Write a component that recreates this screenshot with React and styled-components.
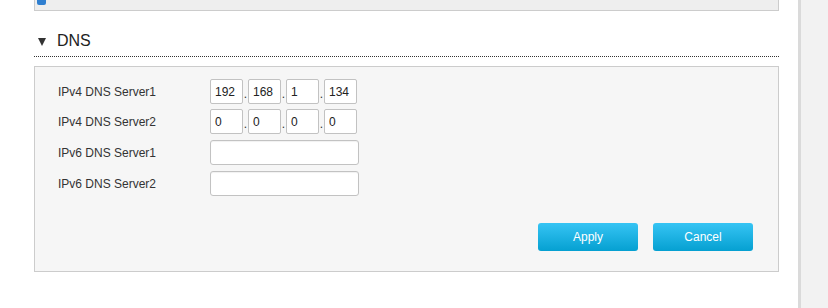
import React from "react";
import styled, { createGlobalStyle } from "styled-components";

const Global = createGlobalStyle`
  html, body {
    margin: 0;
    padding: 0;
    background: #f2f2f2;
    font-family: "Liberation Sans", Arial, sans-serif;
  }
`;

const Page = styled.div`
  display: flex;
  height: 308px;
  overflow: hidden;
`;

const Main = styled.main`
  width: 798px;
  background: #ffffff;
  padding-left: 34px;
  box-sizing: border-box;
`;

const Rail = styled.div`
  flex: 1;
  border-left: 3px solid #dadada;
  background: #f2f2f2;
`;

const Column = styled.div`
  width: 745px;
  display: flex;
  flex-direction: column;
`;

const PrevPanel = styled.div`
  height: 10px;
  background: #eeeeee;
  border: 1px solid #cccccc;
  border-top: none;
  padding-left: 2px;
`;

const CheckTail = styled.div`
  width: 9px;
  height: 5px;
  background: #2f7fd0;
  border-radius: 0 0 2px 2px;
`;

const Heading = styled.div`
  display: flex;
  align-items: center;
  height: 46px;
  padding-left: 4px;
  padding-top: 14px;
  box-sizing: border-box;
  border-bottom: 1px dotted #333333;
  font-size: 16px;
  color: #222222;
`;

const Arrow = styled.span`
  width: 0;
  height: 0;
  border-left: 4.5px solid transparent;
  border-right: 4.5px solid transparent;
  border-top: 8px solid #333333;
  margin: 2px 11px 0 0;
`;

const Box = styled.section`
  margin-top: 9px;
  height: 206px;
  box-sizing: border-box;
  background: #f6f6f6;
  border: 1px solid #cccccc;
  padding: 12px 25px 0 23px;
  display: flex;
  flex-direction: column;
`;

const Form = styled.div`
  display: grid;
  grid-template-columns: 152px auto;
  row-gap: 5px;
  align-items: center;
  justify-content: start;
`;

const Label = styled.div`
  font-size: 12px;
  color: #333333;
  margin-top: ${(p) => (p.$shift ? "1px" : "0")};
`;

const Octets = styled.div`
  display: flex;
  align-items: flex-end;
  height: 25px;
`;

const Octet = styled.div`
  width: 33px;
  height: 25px;
  box-sizing: border-box;
  border: 1px solid #c2c2c2;
  border-radius: 2px;
  background: #ffffff;
  font-size: 12px;
  color: #222222;
  padding-left: 4px;
  display: flex;
  align-items: center;
`;

const Dot = styled.span`
  width: 5px;
  text-align: center;
  font-size: 12px;
  line-height: 12px;
  color: #333333;
  padding-bottom: 4px;
`;

const Field = styled.div`
  width: 149px;
  height: 25px;
  box-sizing: border-box;
  border: 1px solid #c2c2c2;
  border-radius: 3px;
  background: #ffffff;
  box-shadow: inset 0 1px 1px rgba(0, 0, 0, 0.06);
  margin-top: ${(p) => (p.$shift ? "1px" : "0")};
`;

const Actions = styled.div`
  display: flex;
  justify-content: flex-end;
  gap: 15px;
  margin-top: 27px;
`;

const Button = styled.button`
  width: 100px;
  height: 28px;
  border: none;
  border-radius: 3px;
  background: linear-gradient(#36c4f4, #05a0d1);
  color: #ffffff;
  font-family: "Liberation Sans", Arial, sans-serif;
  font-size: 12px;
  cursor: pointer;
`;

const rows = [
  { label: "IPv4 DNS Server1", ip: ["192", "168", "1", "134"] },
  { label: "IPv4 DNS Server2", ip: ["0", "0", "0", "0"] },
  { label: "IPv6 DNS Server1" },
  { label: "IPv6 DNS Server2" },
];

const IpInput = ({ parts }) => (
  <Octets>
    {parts.map((p, i) => (
      <React.Fragment key={i}>
        {i > 0 && <Dot>.</Dot>}
        <Octet>{p}</Octet>
      </React.Fragment>
    ))}
  </Octets>
);

export default function App() {
  return (
    <>
      <Global />
      <Page>
        <Main>
          <Column>
            <PrevPanel>
              <CheckTail />
            </PrevPanel>
            <Heading>
              <Arrow />
              DNS
            </Heading>
            <Box>
              <Form>
                {rows.map((r, i) => (
                  <React.Fragment key={r.label}>
                    <Label $shift={i > 1}>{r.label}</Label>
                    {r.ip ? <IpInput parts={r.ip} /> : <Field $shift={i > 1} />}
                  </React.Fragment>
                ))}
              </Form>
              <Actions>
                <Button>Apply</Button>
                <Button>Cancel</Button>
              </Actions>
            </Box>
          </Column>
        </Main>
        <Rail />
      </Page>
    </>
  );
}
